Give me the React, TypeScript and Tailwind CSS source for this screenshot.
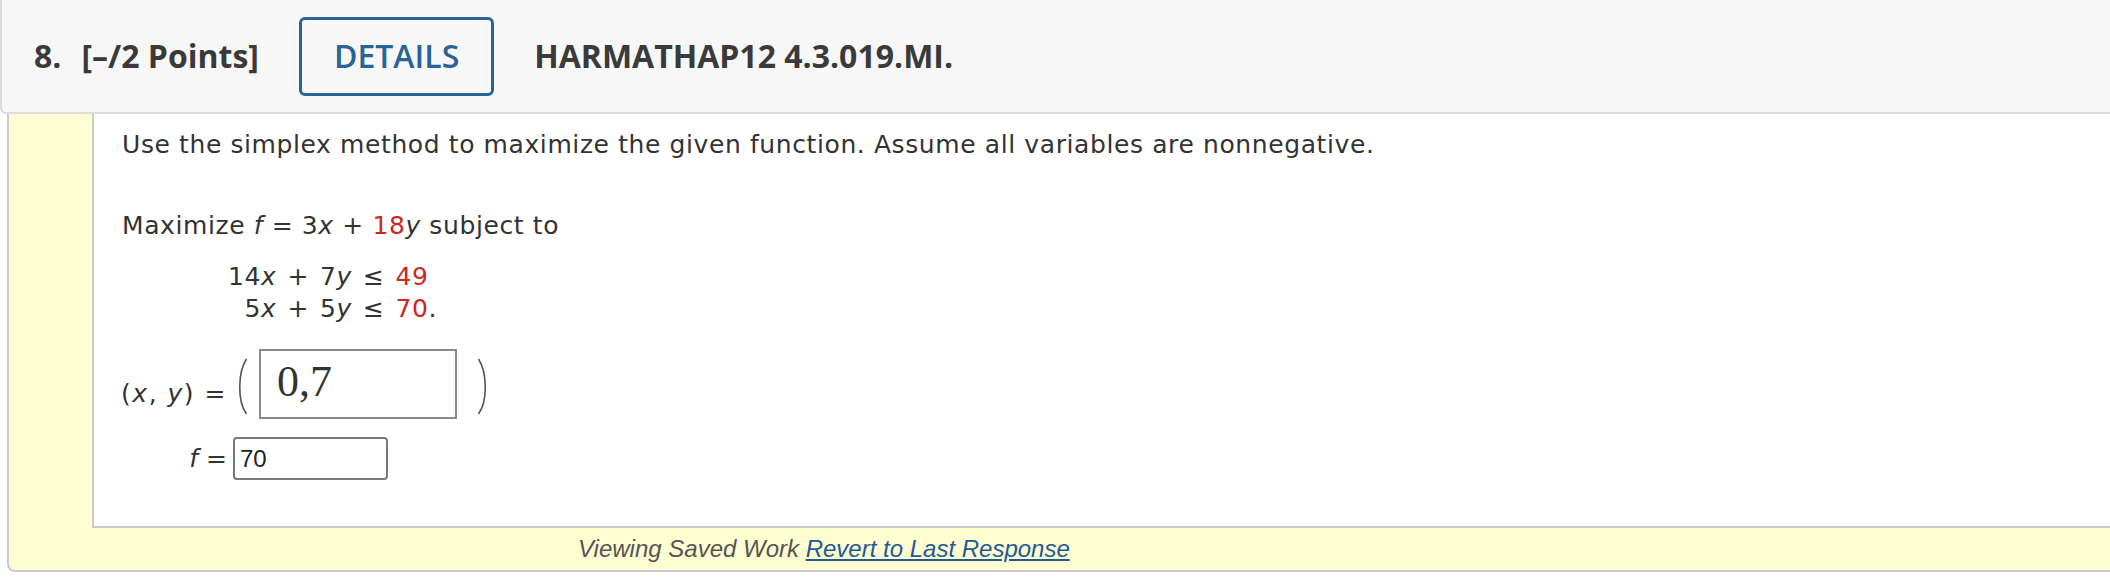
export default function App() {
  return (
    <div className="w-[2110px] min-h-[582px] bg-white text-[#333]">
      {/* Question header */}
      <div className="h-[114px] bg-[#f7f7f7] border-l-2 border-b-2 border-[#dcdcdc] rounded-bl-[6px] flex items-center pl-[32px] font-['Open_Sans',sans-serif] text-[32px] font-bold text-[#3a3a3a]">
        <span>8.</span>
        <span className="ml-[20px]">[–/2 Points]</span>
        <button className="ml-[40px] h-[79px] px-[32px] border-[3px] border-[#2a6398] rounded-[6px] text-[#2a6398] font-semibold">
          DETAILS
        </button>
        <span className="ml-[40px]">HARMATHAP12 4.3.019.MI.</span>
      </div>

      {/* Question body */}
      <div className="ml-[7px] bg-[#fffdd2] border-l-2 border-b-2 border-[#cccccc] rounded-bl-[8px]">
        <div className="ml-[83px] bg-white border-l-2 border-b-2 border-[#cccccc] pl-[28px] pt-[15px] pb-[46px] font-['DejaVu_Sans',sans-serif] text-[25px] tracking-[0.6px] leading-[32px] text-[#333]">
          <p>Use the simplex method to maximize the given function. Assume all variables are nonnegative.</p>

          <p className="mt-[49px]">
            Maximize <i>f</i> = 3<i>x</i> + <span className="text-[#d0261e]">18</span>
            <i>y</i> subject to
          </p>

          <div className="mt-[19px] ml-[106px] inline-grid grid-cols-[auto_auto_auto_auto_auto] gap-x-[11px]">
            <span className="text-right">
              14<i>x</i>
            </span>
            <span>+</span>
            <span className="text-right">
              7<i>y</i>
            </span>
            <span>≤</span>
            <span className="text-[#d0261e]">49</span>
            <span className="text-right">
              5<i>x</i>
            </span>
            <span>+</span>
            <span className="text-right">
              5<i>y</i>
            </span>
            <span>≤</span>
            <span>
              <span className="text-[#d0261e]">70</span>.
            </span>
          </div>

          <div className="mt-[24px] grid grid-cols-[105px_auto] items-start gap-y-[18px]">
            <span className="mt-[29px] -ml-[4px] text-right whitespace-nowrap tracking-[1.5px]">
              (<i>x</i>, <i>y</i>) =
            </span>
            <div className="flex items-start">
              <svg className="ml-[8px] mt-[9px]" width="13" height="57" viewBox="0 0 13 57">
                <path d="M11.5 1 C3 14 2 43 11.5 56" fill="none" stroke="#555" strokeWidth="1.6" />
              </svg>
              <div className="ml-[11px] w-[198px] h-[70px] border-2 border-[#8a8a8a] pl-[16px] pt-[3px] font-['Liberation_Serif',serif] text-[44px] tracking-normal leading-[56px] text-[#333]">
                0,7
              </div>
              <svg className="ml-[20px] mt-[9px]" width="13" height="57" viewBox="0 0 13 57">
                <path d="M1.5 1 C10 14 11 43 1.5 56" fill="none" stroke="#555" strokeWidth="1.6" />
              </svg>
            </div>

            <span className="mt-[6px] text-right tracking-normal">
              <i>f</i> =
            </span>
            <div className="ml-[6px] w-[155px] h-[43px] border-2 border-[#7a7a7a] rounded-[4px] flex items-center pl-[5px] font-['Liberation_Sans',sans-serif] text-[24px] tracking-normal leading-[24px] text-[#222]">
              70
            </div>
          </div>
        </div>

        <div className="h-[42px] pl-[569px] font-['Liberation_Sans',sans-serif] italic text-[24px] leading-[42px] text-[#555]">
          Viewing Saved Work{" "}
          <a href="#" className="text-[#1f5a93] underline">
            Revert to Last Response
          </a>
        </div>
      </div>
    </div>
  );
}
